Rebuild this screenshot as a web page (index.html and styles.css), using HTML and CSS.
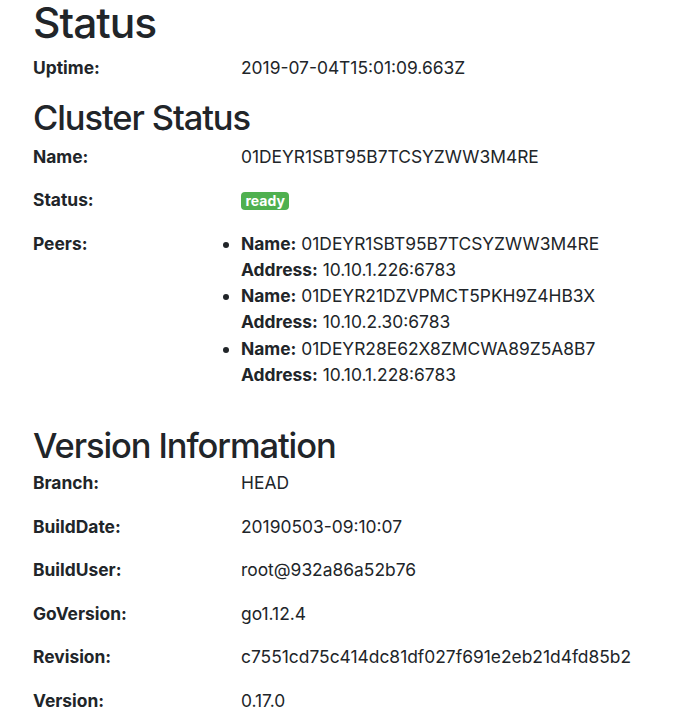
FILE: index.html
```html
<!DOCTYPE html>
<html>
<head>
<meta charset="utf-8">
<link rel="stylesheet" href="styles.css">
</head>
<body>
<main class="page">
  <h1 class="title">Status</h1>
  <div class="row row-first"><div class="label">Uptime:</div><div class="value">2019-07-04T15:01:09.663Z</div></div>

  <h2 class="section">Cluster Status</h2>
  <div class="row"><div class="label">Name:</div><div class="value">01DEYR1SBT95B7TCSYZWW3M4RE</div></div>
  <div class="row"><div class="label">Status:</div><div class="value"><span class="badge">ready</span></div></div>
  <div class="row"><div class="label">Peers:</div>
    <div class="value">
      <ul class="peers">
        <li><b>Name:</b> 01DEYR1SBT95B7TCSYZWW3M4RE<br><b>Address:</b> 10.10.1.226:6783</li>
        <li><b>Name:</b> 01DEYR21DZVPMCT5PKH9Z4HB3X<br><b>Address:</b> 10.10.2.30:6783</li>
        <li><b>Name:</b> 01DEYR28E62X8ZMCWA89Z5A8B7<br><b>Address:</b> 10.10.1.228:6783</li>
      </ul>
    </div>
  </div>

  <h2 class="section section-version">Version Information</h2>
  <div class="row"><div class="label">Branch:</div><div class="value">HEAD</div></div>
  <div class="row"><div class="label">BuildDate:</div><div class="value">20190503-09:10:07</div></div>
  <div class="row"><div class="label">BuildUser:</div><div class="value">root@932a86a52b76</div></div>
  <div class="row"><div class="label">GoVersion:</div><div class="value">go1.12.4</div></div>
  <div class="row"><div class="label">Revision:</div><div class="value">c7551cd75c414dc81df027f691e2eb21d4fd85b2</div></div>
  <div class="row"><div class="label">Version:</div><div class="value">0.17.0</div></div>
</main>
</body>
</html>
```

FILE: styles.css
```css
html, body {
  margin: 0;
  padding: 0;
  background: #fff;
}
body {
  font-family: Inter, "Noto Sans", "Liberation Sans", sans-serif;
  font-size: 17.4px;
  line-height: 26.2px;
  color: #212529;
}
.page {
  padding-left: 33px;
}
.title {
  font-size: 42.5px;
  font-weight: 500;
  line-height: 46px;
  margin: 0 0 9px;
  letter-spacing: -1px;
}
.section {
  font-size: 34.5px;
  font-weight: 500;
  line-height: 40px;
  margin: -1px 0 6px;
  letter-spacing: -1.1px;
}
.section-version {
  margin-top: 38px;
  margin-bottom: 4px;
}
.row {
  display: grid;
  grid-template-columns: 208px 1fr;
  margin-bottom: 17.4px;
}
.label {
  font-weight: 700;
}
.value {
  min-width: 0;
}
.badge {
  display: inline-block;
  background: #4fb04f;
  color: #fff;
  font-size: 14px;
  font-weight: 700;
  line-height: 14px;
  padding: 2px 4.5px;
  border-radius: 4px;
}
.peers {
  margin: 0;
  padding: 0;
  line-height: 26.2px;
}
.peers li {
  margin: 0;
}
.peers b {
  font-weight: 700;
}
```
